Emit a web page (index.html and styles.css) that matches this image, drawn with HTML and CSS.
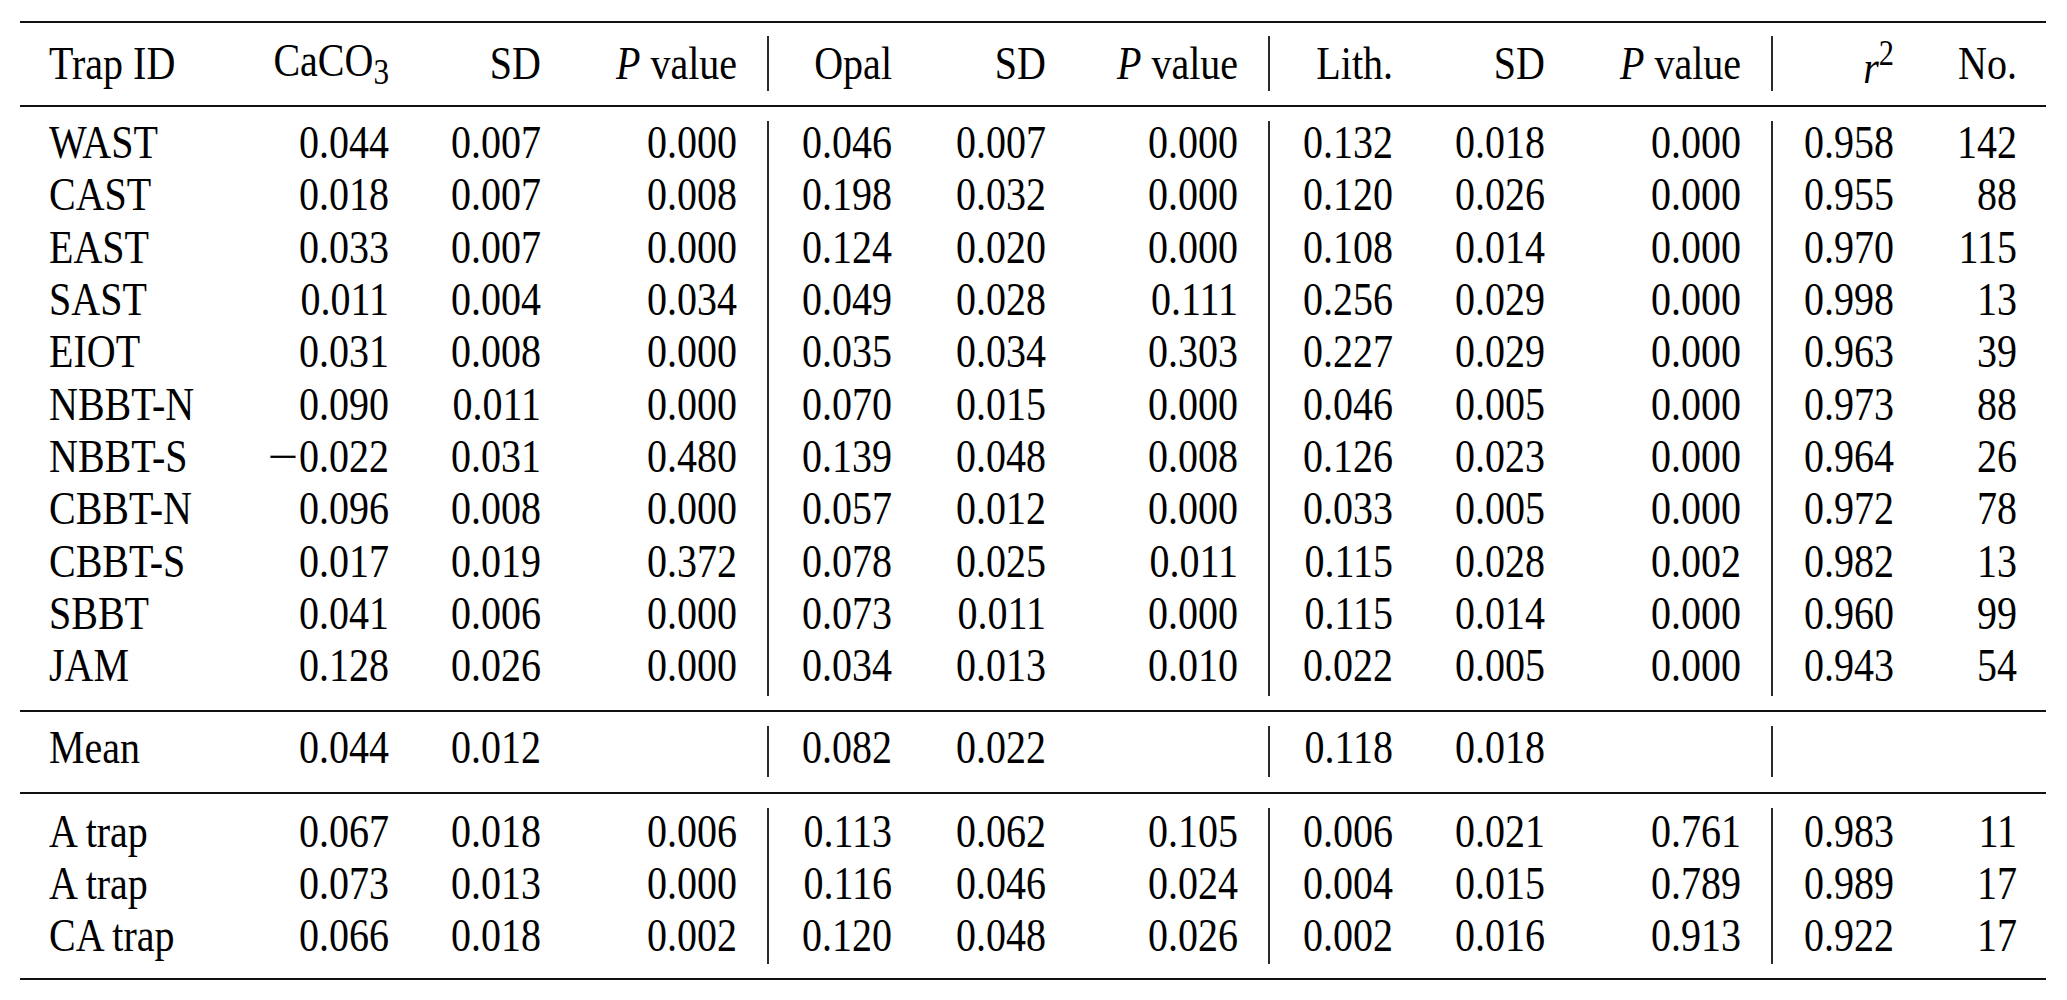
FILE: index.html
```html
<!DOCTYPE html>
<html lang="en">
<head>
<meta charset="utf-8">
<title>Trap table</title>
<link rel="stylesheet" href="styles.css">
</head>
<body>
<table class="data">
  <colgroup>
    <col class="c0"><col class="c1"><col class="c2"><col class="c3">
    <col class="c4"><col class="c5"><col class="c6">
    <col class="c7"><col class="c8"><col class="c9">
    <col class="c10"><col class="c11">
  </colgroup>
  <thead>
    <tr class="gap gap-top"><td colspan="12"></td></tr>
    <tr class="head">
      <td class="id"><span>Trap ID</span></td>
      <td><span>CaCO<span class="sub">3</span></span></td>
      <td><span>SD</span></td>
      <td><span><i>P</i> value</span></td>
      <td class="sep"><span>Opal</span></td>
      <td><span>SD</span></td>
      <td><span><i>P</i> value</span></td>
      <td class="sep"><span>Lith.</span></td>
      <td><span>SD</span></td>
      <td><span><i>P</i> value</span></td>
      <td class="sep"><span><i>r</i><span class="sup">2</span></span></td>
      <td class="last"><span>No.</span></td>
    </tr>
    <tr class="gap"><td colspan="12"></td></tr>
  </thead>
  <tbody>
    <tr class="gap rule"><td colspan="12"></td></tr>
    <tr class="row"><td class="id"><span>WAST</span></td><td><span>0.044</span></td><td><span>0.007</span></td><td><span>0.000</span></td><td class="sep"><span>0.046</span></td><td><span>0.007</span></td><td><span>0.000</span></td><td class="sep"><span>0.132</span></td><td><span>0.018</span></td><td><span>0.000</span></td><td class="sep"><span>0.958</span></td><td class="last"><span>142</span></td></tr>
    <tr class="row"><td class="id"><span>CAST</span></td><td><span>0.018</span></td><td><span>0.007</span></td><td><span>0.008</span></td><td class="sep"><span>0.198</span></td><td><span>0.032</span></td><td><span>0.000</span></td><td class="sep"><span>0.120</span></td><td><span>0.026</span></td><td><span>0.000</span></td><td class="sep"><span>0.955</span></td><td class="last"><span>88</span></td></tr>
    <tr class="row"><td class="id"><span>EAST</span></td><td><span>0.033</span></td><td><span>0.007</span></td><td><span>0.000</span></td><td class="sep"><span>0.124</span></td><td><span>0.020</span></td><td><span>0.000</span></td><td class="sep"><span>0.108</span></td><td><span>0.014</span></td><td><span>0.000</span></td><td class="sep"><span>0.970</span></td><td class="last"><span>115</span></td></tr>
    <tr class="row"><td class="id"><span>SAST</span></td><td><span>0.011</span></td><td><span>0.004</span></td><td><span>0.034</span></td><td class="sep"><span>0.049</span></td><td><span>0.028</span></td><td><span>0.111</span></td><td class="sep"><span>0.256</span></td><td><span>0.029</span></td><td><span>0.000</span></td><td class="sep"><span>0.998</span></td><td class="last"><span>13</span></td></tr>
    <tr class="row"><td class="id"><span>EIOT</span></td><td><span>0.031</span></td><td><span>0.008</span></td><td><span>0.000</span></td><td class="sep"><span>0.035</span></td><td><span>0.034</span></td><td><span>0.303</span></td><td class="sep"><span>0.227</span></td><td><span>0.029</span></td><td><span>0.000</span></td><td class="sep"><span>0.963</span></td><td class="last"><span>39</span></td></tr>
    <tr class="row"><td class="id"><span>NBBT-N</span></td><td><span>0.090</span></td><td><span>0.011</span></td><td><span>0.000</span></td><td class="sep"><span>0.070</span></td><td><span>0.015</span></td><td><span>0.000</span></td><td class="sep"><span>0.046</span></td><td><span>0.005</span></td><td><span>0.000</span></td><td class="sep"><span>0.973</span></td><td class="last"><span>88</span></td></tr>
    <tr class="row"><td class="id"><span>NBBT-S</span></td><td><span><span class="minus">&minus;</span>0.022</span></td><td><span>0.031</span></td><td><span>0.480</span></td><td class="sep"><span>0.139</span></td><td><span>0.048</span></td><td><span>0.008</span></td><td class="sep"><span>0.126</span></td><td><span>0.023</span></td><td><span>0.000</span></td><td class="sep"><span>0.964</span></td><td class="last"><span>26</span></td></tr>
    <tr class="row"><td class="id"><span>CBBT-N</span></td><td><span>0.096</span></td><td><span>0.008</span></td><td><span>0.000</span></td><td class="sep"><span>0.057</span></td><td><span>0.012</span></td><td><span>0.000</span></td><td class="sep"><span>0.033</span></td><td><span>0.005</span></td><td><span>0.000</span></td><td class="sep"><span>0.972</span></td><td class="last"><span>78</span></td></tr>
    <tr class="row"><td class="id"><span>CBBT-S</span></td><td><span>0.017</span></td><td><span>0.019</span></td><td><span>0.372</span></td><td class="sep"><span>0.078</span></td><td><span>0.025</span></td><td><span>0.011</span></td><td class="sep"><span>0.115</span></td><td><span>0.028</span></td><td><span>0.002</span></td><td class="sep"><span>0.982</span></td><td class="last"><span>13</span></td></tr>
    <tr class="row"><td class="id"><span>SBBT</span></td><td><span>0.041</span></td><td><span>0.006</span></td><td><span>0.000</span></td><td class="sep"><span>0.073</span></td><td><span>0.011</span></td><td><span>0.000</span></td><td class="sep"><span>0.115</span></td><td><span>0.014</span></td><td><span>0.000</span></td><td class="sep"><span>0.960</span></td><td class="last"><span>99</span></td></tr>
    <tr class="row"><td class="id"><span>JAM</span></td><td><span>0.128</span></td><td><span>0.026</span></td><td><span>0.000</span></td><td class="sep"><span>0.034</span></td><td><span>0.013</span></td><td><span>0.010</span></td><td class="sep"><span>0.022</span></td><td><span>0.005</span></td><td><span>0.000</span></td><td class="sep"><span>0.943</span></td><td class="last"><span>54</span></td></tr>
    <tr class="gap"><td colspan="12"></td></tr>
  </tbody>
  <tbody>
    <tr class="gap rule"><td colspan="12"></td></tr>
    <tr class="row mean"><td class="id"><span>Mean</span></td><td><span>0.044</span></td><td><span>0.012</span></td><td></td><td class="sep"><span>0.082</span></td><td><span>0.022</span></td><td></td><td class="sep"><span>0.118</span></td><td><span>0.018</span></td><td></td><td class="sep"></td><td class="last"></td></tr>
    <tr class="gap gap-mean"><td colspan="12"></td></tr>
  </tbody>
  <tbody>
    <tr class="gap rule"><td colspan="12"></td></tr>
    <tr class="row row-b"><td class="id"><span>A trap</span></td><td><span>0.067</span></td><td><span>0.018</span></td><td><span>0.006</span></td><td class="sep"><span>0.113</span></td><td><span>0.062</span></td><td><span>0.105</span></td><td class="sep"><span>0.006</span></td><td><span>0.021</span></td><td><span>0.761</span></td><td class="sep"><span>0.983</span></td><td class="last"><span>11</span></td></tr>
    <tr class="row row-b"><td class="id"><span>A trap</span></td><td><span>0.073</span></td><td><span>0.013</span></td><td><span>0.000</span></td><td class="sep"><span>0.116</span></td><td><span>0.046</span></td><td><span>0.024</span></td><td class="sep"><span>0.004</span></td><td><span>0.015</span></td><td><span>0.789</span></td><td class="sep"><span>0.989</span></td><td class="last"><span>17</span></td></tr>
    <tr class="row row-b"><td class="id"><span>CA trap</span></td><td><span>0.066</span></td><td><span>0.018</span></td><td><span>0.002</span></td><td class="sep"><span>0.120</span></td><td><span>0.048</span></td><td><span>0.026</span></td><td class="sep"><span>0.002</span></td><td><span>0.016</span></td><td><span>0.913</span></td><td class="sep"><span>0.922</span></td><td class="last"><span>17</span></td></tr>
    <tr class="gap"><td colspan="12"></td></tr>
  </tbody>
</table>
</body>
</html>
```

FILE: styles.css
```css
html, body {
  margin: 0;
  padding: 0;
  background: #ffffff;
}

body {
  padding: 21px 0 0 20px;
  font-family: "Liberation Serif", "Times New Roman", serif;
  color: #000000;
}

.data {
  table-layout: fixed;
  width: 2026px;
  border-collapse: separate;
  border-spacing: 0;
  border-top: 2px solid #111111;
  border-bottom: 2px solid #111111;
  font-size: 40px;
  line-height: 1;
}

.c0 { width: 213px; }
.c1 { width: 186px; }
.c2 { width: 152px; }
.c3 { width: 196px; }
.c4 { width: 155px; }
.c5 { width: 154px; }
.c6 { width: 192px; }
.c7 { width: 155px; }
.c8 { width: 152px; }
.c9 { width: 196px; }
.c10 { width: 153px; }
.c11 { width: 122px; }

.data td {
  box-sizing: border-box;
  padding: 0 30px 0 0;
  text-align: right;
  vertical-align: middle;
  white-space: nowrap;
}

/* The source figure's type is set taller and narrower than plain Times */
.data td > span {
  display: inline-block;
  transform: scaleY(1.15);
}

.data td.id {
  text-align: left;
  padding-left: 29px;
  padding-right: 0;
}

.data td.last {
  padding-right: 29px;
}

.data td.sep {
  border-left: 2px solid #2a2a2a;
}

.gap td {
  height: 14px;
  padding: 0;
}

.gap-top td {
  height: 13px;
}

.gap-mean td {
  height: 15px;
}

.rule td {
  height: 16px;
  border-top: 2px solid #111111;
}

.head td {
  height: 55px;
}

.row td {
  height: 52.3px;
  padding-bottom: 8px;
}

.row.mean td {
  height: 51px;
  padding-bottom: 8px;
}

.row.row-b td {
  height: 52px;
  padding-bottom: 5px;
}

.minus {
  display: inline-block;
  transform: scaleX(1.35);
  transform-origin: 100% 50%;
}

.sub {
  font-size: 0.78em;
  vertical-align: -0.24em;
}

.sup {
  font-size: 0.76em;
  vertical-align: 0.52em;
}
```
